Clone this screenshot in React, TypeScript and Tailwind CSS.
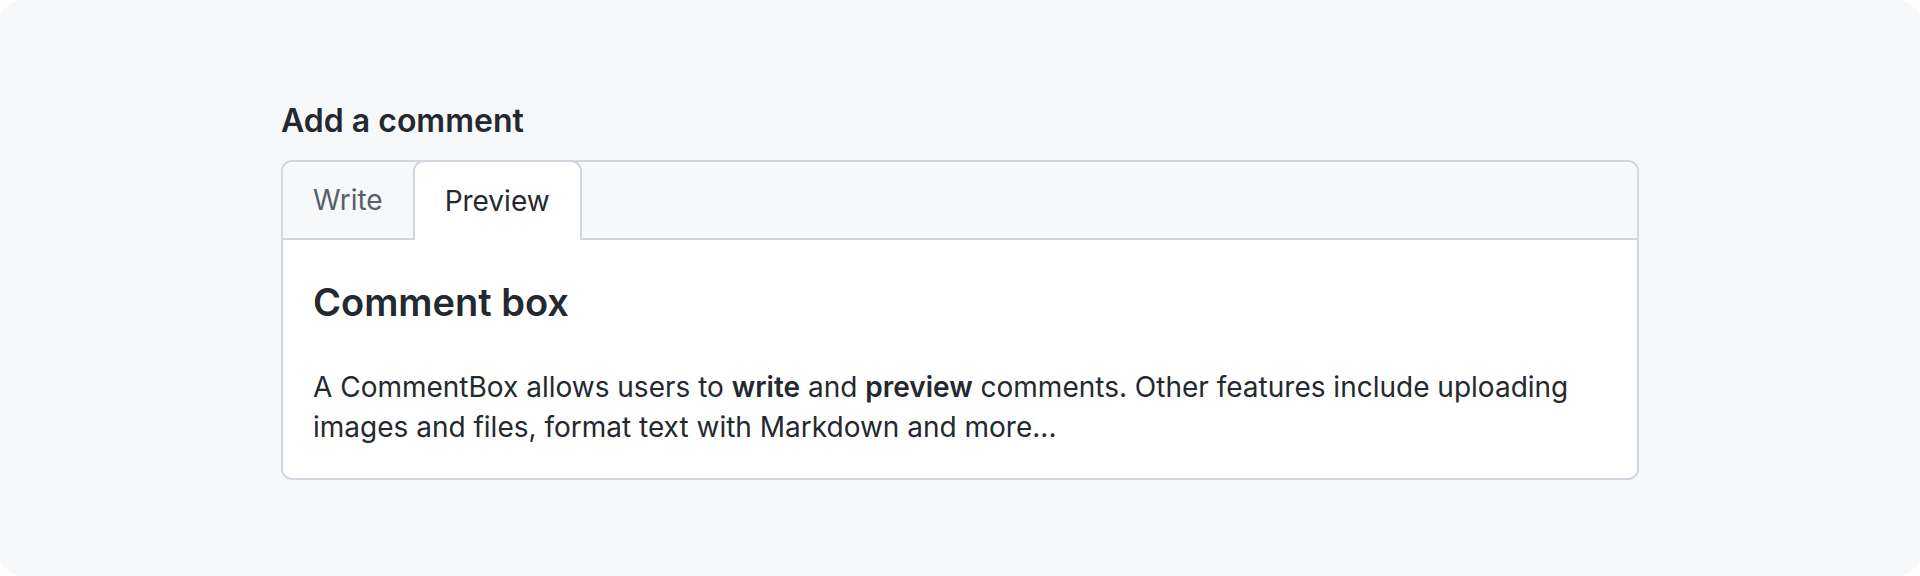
import React from 'react';

const App: React.FC = () => {
  return (
    <div className="w-[1920px] h-[576px] bg-white font-['Inter','Noto_Sans',sans-serif] text-[#24292f]">
      <div className="h-full rounded-[22px] bg-[#f6f8fa] flex justify-center pt-[97px]">
        <div className="w-[1358px]">
          <label className="block text-[32px] font-semibold leading-[48px] mb-[15px]">Add a comment</label>
          <div className="border-2 border-[#d0d7de] rounded-[11px] bg-white overflow-hidden">
            {/* tabs */}
            <div className="flex bg-[#f6f8fa] border-b-2 border-[#d0d7de] h-[78px]">
              <button className="h-full px-[30px] text-[28px] leading-none text-[#57606a]">Write</button>
              <div className="-mt-[2px] -mb-[2px] flex items-center px-[30px] bg-white border-2 border-b-0 border-[#d0d7de] rounded-t-[11px] text-[28px] leading-none">
                Preview
              </div>
            </div>
            {/* preview body */}
            <div className="px-[30px] pt-[35px] pb-[31px]">
              <h2 className="text-[38px] font-semibold leading-[54px] mb-[38px]">Comment box</h2>
              <p className="text-[28px] leading-[40px]">
                A CommentBox allows users to <strong className="font-semibold">write</strong> and{' '}
                <strong className="font-semibold">preview</strong> comments. Other features include uploading images and
                files, format text with Markdown and more...
              </p>
            </div>
          </div>
        </div>
      </div>
    </div>
  );
};

export default App;
